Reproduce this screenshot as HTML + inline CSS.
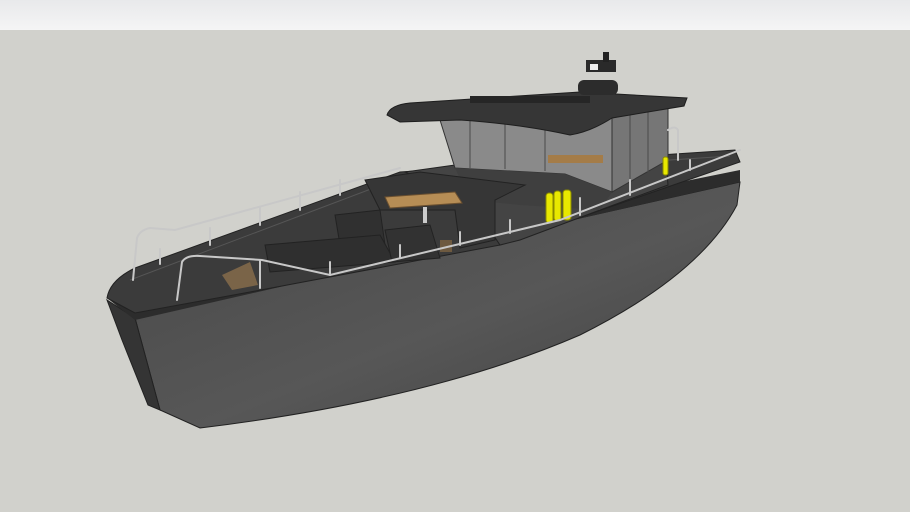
<!DOCTYPE html>
<html><head><meta charset="utf-8"><style>
html,body{margin:0;padding:0;width:910px;height:512px;overflow:hidden;background:#d1d1cd}
</style></head><body>
<svg width="910" height="512" viewBox="0 0 910 512" xmlns="http://www.w3.org/2000/svg">
<defs>
<linearGradient id="top" x1="0" y1="0" x2="0" y2="1"><stop offset="0" stop-color="#e8e9eb"/><stop offset="1" stop-color="#f5f5f5"/></linearGradient>
<linearGradient id="hull" x1="0" y1="0" x2="1" y2="1"><stop offset="0" stop-color="#474747"/><stop offset="0.55" stop-color="#575757"/><stop offset="1" stop-color="#404040"/></linearGradient>
</defs>
<rect x="0" y="0" width="910" height="30" fill="url(#top)"/>
<rect x="0" y="30" width="910" height="482" fill="#d1d1cc"/>
<!-- hull side -->
<path d="M135,318 L740,182 L737,205 Q700,275 580,335 Q430,400 200,428 L160,410 Z" fill="url(#hull)" stroke="#222" stroke-width="1"/>
<!-- bow face -->
<path d="M107,300 L135,318 L160,410 L148,405 L122,340 Z" fill="#343434" stroke="#222" stroke-width="1"/>
<!-- rub rail -->
<path d="M107,298 L740,170 L740,182 L135,320 Z" fill="#2c2c2c"/>
<!-- deck -->
<path d="M107,298 Q110,280 135,268 L400,172 L735,150 L740,162 L500,245 L250,292 L135,313 Z" fill="#3b3b3b" stroke="#222" stroke-width="1"/>
<path d="M130,280 L400,178 L730,156" fill="none" stroke="#555" stroke-width="1"/>
<!-- cabin body -->
<path d="M405,172 L455,165 L665,150 L668,185 L600,210 L520,240 L500,245 L470,200 Z" fill="#444" stroke="#222"/>
<!-- glass -->
<path d="M440,120 L612,118 L612,192 L565,174 L455,168 Z" fill="#8a8a8a" stroke="#333"/>
<path d="M612,118 L668,106 L668,160 L612,192 Z" fill="#767676" stroke="#333"/>
<g stroke="#4a4a4a" stroke-width="1"><line x1="470" y1="121" x2="470" y2="168"/><line x1="505" y1="121" x2="505" y2="169"/><line x1="545" y1="121" x2="545" y2="171"/><line x1="630" y1="115" x2="630" y2="182"/><line x1="648" y1="111" x2="648" y2="172"/></g>
<path d="M455,168 L565,174 L612,192 L600,210 L520,205 L470,200 Z" fill="#3f3f3f"/>
<rect x="548" y="155" width="55" height="8" fill="#a47c48"/>
<!-- roof -->
<path d="M387,115 Q390,105 410,103 L580,92 L687,98 L684,106 L612,118 Q590,132 570,135 Q520,124 460,120 L400,122 Z" fill="#363636" stroke="#1e1e1e"/>
<rect x="470" y="96" width="120" height="7" fill="#262626"/>
<!-- mast -->
<rect x="578" y="80" width="40" height="15" rx="6" fill="#2c2c2c"/>
<rect x="586" y="60" width="30" height="12" fill="#2a2a2a"/>
<rect x="590" y="64" width="8" height="6" fill="#eee"/>
<rect x="603" y="52" width="6" height="10" fill="#222"/>
<!-- seating area -->
<path d="M365,180 L420,172 L525,185 L495,200 L495,240 L460,248 L455,210 L380,210 Z" fill="#363636" stroke="#222"/>
<path d="M335,215 L380,210 L385,245 L340,245 Z" fill="#303030" stroke="#222"/>
<path d="M265,245 L380,235 L395,262 L270,272 Z" fill="#2f2f2f" stroke="#222"/>
<path d="M385,230 L430,225 L440,258 L392,262 Z" fill="#323232" stroke="#222"/>
<!-- table -->
<path d="M385,197 L455,192 L462,203 L390,208 Z" fill="#b68d55" stroke="#6b5030"/>
<rect x="423" y="207" width="4" height="16" fill="#ccc"/>
<!-- teak -->
<path d="M222,275 L250,262 L258,285 L232,290 Z" fill="#7a6448"/>
<rect x="440" y="240" width="12" height="12" fill="#6e5a40"/>
<!-- yellow tanks -->
<g fill="#e8e800" stroke="#8a8a00"><rect x="546" y="193" width="7" height="30" rx="3"/><rect x="554" y="191" width="7" height="30" rx="3"/><rect x="563" y="190" width="8" height="30" rx="3"/><rect x="663" y="157" width="5" height="18" rx="2"/></g>
<!-- railings -->
<g fill="none" stroke="#c8c8c8" stroke-width="2" stroke-linecap="round">
<path d="M133,280 L137,238 Q140,230 150,228 L175,230 L400,168"/>
<path d="M177,300 L182,262 Q186,255 200,256 L262,260 L330,275 L560,220 L740,150"/>
<path d="M160,249 L160,264"/><path d="M210,228 L210,245"/><path d="M260,208 L260,225"/><path d="M300,192 L300,210"/><path d="M340,180 L340,195"/>
<path d="M260,260 L260,288"/><path d="M330,275 L330,262"/><path d="M400,258 L400,245"/><path d="M460,245 L460,232"/><path d="M510,233 L510,220"/><path d="M580,215 L580,198"/><path d="M630,195 L630,180"/><path d="M690,170 L690,160"/>
<path d="M668,130 Q675,125 678,130 L678,160"/>
</g>
</svg>
</body></html>
